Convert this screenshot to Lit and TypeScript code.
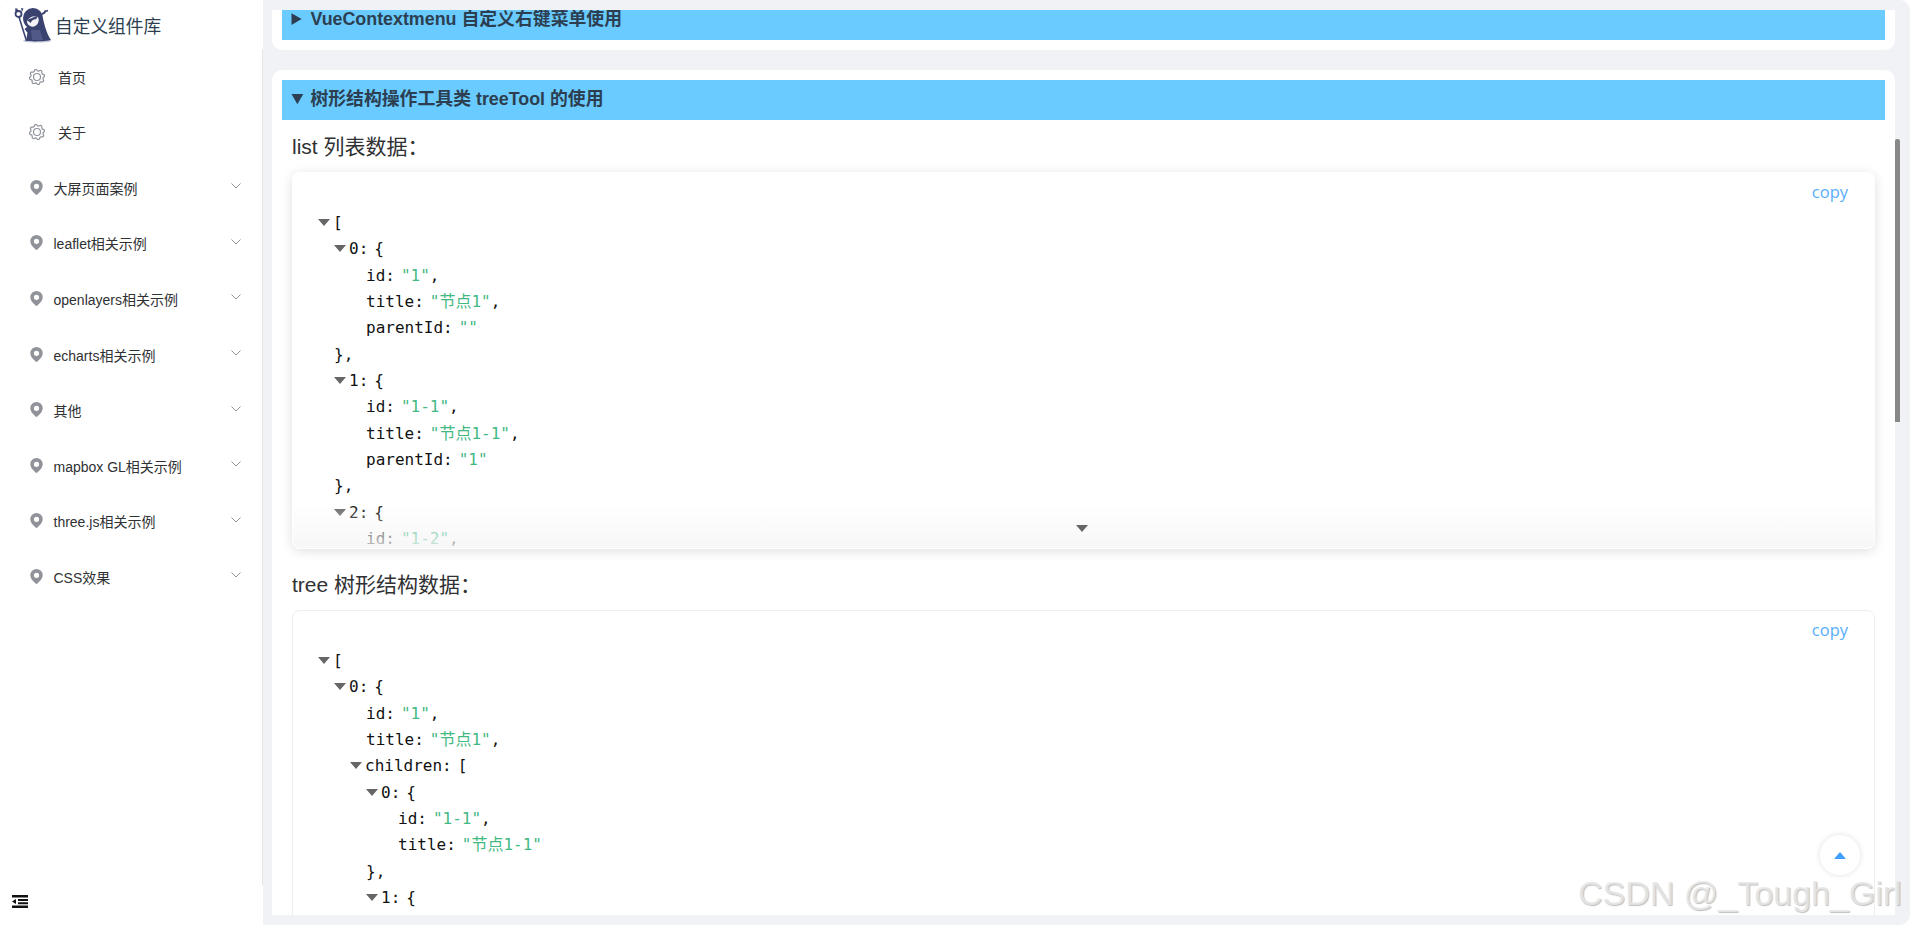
import { LitElement, html, css, svg } from "lit";
import { customElement } from "lit/decorators.js";

type Seg = { t: string; c?: "k" | "s" | "p" };
type Line = { level: number; arrow?: boolean; segs: Seg[] };

const key = (k: string) => ({ t: k + ":", c: "k" as const });
const str = (s: string) => ({ t: `"${s}"`, c: "s" as const });
const p = (s: string) => ({ t: s, c: "p" as const });

const LIST: Line[] = [
  { level: 0, arrow: true, segs: [p("[")] },
  { level: 1, arrow: true, segs: [key("0"), p("{")] },
  { level: 2, segs: [key("id"), str("1"), p(",")] },
  { level: 2, segs: [key("title"), str("节点1"), p(",")] },
  { level: 2, segs: [key("parentId"), str("")] },
  { level: 0, segs: [p("},")] },
  { level: 1, arrow: true, segs: [key("1"), p("{")] },
  { level: 2, segs: [key("id"), str("1-1"), p(",")] },
  { level: 2, segs: [key("title"), str("节点1-1"), p(",")] },
  { level: 2, segs: [key("parentId"), str("1")] },
  { level: 0, segs: [p("},")] },
  { level: 1, arrow: true, segs: [key("2"), p("{")] },
  { level: 2, segs: [key("id"), str("1-2"), p(",")] },
];

const TREE: Line[] = [
  { level: 0, arrow: true, segs: [p("[")] },
  { level: 1, arrow: true, segs: [key("0"), p("{")] },
  { level: 2, segs: [key("id"), str("1"), p(",")] },
  { level: 2, segs: [key("title"), str("节点1"), p(",")] },
  { level: 2, arrow: true, segs: [key("children"), p("[")] },
  { level: 3, arrow: true, segs: [key("0"), p("{")] },
  { level: 4, segs: [key("id"), str("1-1"), p(",")] },
  { level: 4, segs: [key("title"), str("节点1-1")] },
  { level: 2, segs: [p("},")] },
  { level: 3, arrow: true, segs: [key("1"), p("{")] },
];

const MENU: { label: string; icon: "gear" | "pin"; sub?: boolean }[] = [
  { label: "首页", icon: "gear" },
  { label: "关于", icon: "gear" },
  { label: "大屏页面案例", icon: "pin", sub: true },
  { label: "leaflet相关示例", icon: "pin", sub: true },
  { label: "openlayers相关示例", icon: "pin", sub: true },
  { label: "echarts相关示例", icon: "pin", sub: true },
  { label: "其他", icon: "pin", sub: true },
  { label: "mapbox GL相关示例", icon: "pin", sub: true },
  { label: "three.js相关示例", icon: "pin", sub: true },
  { label: "CSS效果", icon: "pin", sub: true },
];

const gearPoints = Array.from({ length: 32 }, (_, i) => {
  const a = ((i - 1.5) * Math.PI) / 16;
  const r = i % 4 < 2 ? 7.6 : 6.2;
  return `${(8 + r * Math.cos(a)).toFixed(2)},${(8 + r * Math.sin(a)).toFixed(2)}`;
}).join(" ");

const gear = svg`<svg class="gear" viewBox="0 0 16 16" width="16" height="16" fill="none" stroke="#8f939c" stroke-width="1.2"><polygon points=${gearPoints} stroke-linejoin="round"/><circle cx="8" cy="8" r="3.5"/></svg>`;
const pin = svg`<svg class="pin" viewBox="0 0 13 15" width="13" height="15"><path fill="#909399" fill-rule="evenodd" d="M6.500 0A6.200 6.200 0 0 0 .3 6.200c0 3.600 4 7.300 6.200 8.800 2.200-1.500 6.200-5.200 6.200-8.800A6.200 6.200 0 0 0 6.500 0zm0 3.700a2.600 2.600 0 1 1 0 5.200 2.600 2.600 0 0 1 0-5.200z"/></svg>`;
const chevron = svg`<svg class="chev" viewBox="0 0 10 6" width="10" height="6" fill="none" stroke="#909399" stroke-width="1"><path d="M.5.5 5 5 9.500.5"/></svg>`;
const logo = svg`<svg class="logo" viewBox="0 0 38 38" width="38" height="38">
  <ellipse cx="23" cy="36" rx="14" ry="1.600" fill="#c5cadb"/>
  <path fill="#3a4270" d="M9 13a10 10 0 0 1 20 0c0 1 .2 2 .6 3.200 1.400 5.400 3 12 7.400 18.800-4 1.500-20 1.800-25 .8l1.500-8-3-3.800 2.600-2C10 19.500 9 16 9 13z"/>
  <path fill="#58618f" opacity=".75" d="M17 25h9l3 10H18z"/>
  <path fill="#f3f2f6" d="M13.300 15.500c1.500-3 6-5.300 9.500-4 2.400 1 2.300 4.600 1 7-1.200 2.200-4.200 3.700-6.500 3-2.600-.8-5-3.500-4-6z"/>
  <path fill="#3a4270" d="M13 15c3-1 6.400-3 10.500-4.200l-1.200 3.400c-2.600-.4-4.600 1.200-5.800 3.800z"/>
  <path fill="none" stroke="#3a4270" stroke-width="1.800" d="M28 9c2-.4 3.200-1.500 3.400-3.600M31 6.500l3-1"/>
  <path fill="none" stroke="#3a4270" stroke-width="1.500" d="M5 12l7.500 24"/>
  <circle cx="4.500" cy="9" r="3" fill="none" stroke="#3a4270" stroke-width="1.800"/>
  <path fill="#3a4270" d="M1 3.500h2.400L4 6 1.600 7zM7 3l2.500.6L8 7z"/>
</svg>`;
const lines = svg`<svg class="fold" viewBox="0 0 16 13" width="16" height="13"><path fill="#111" d="M0 0h16v2.500H0zM6 4h10v2H6zM6 7.200h10v2H6zM0 10.500h16V13H0zM0 6.500l4-2.500v5z"/></svg>`;

@customElement("json-box")
class JsonBox extends LitElement {
  static properties = { lines: { attribute: false }, boxed: { type: Boolean, reflect: true } };
  lines: Line[] = [];
  boxed = false;
  static styles = css`
    :host {
      display: block;
      position: relative;
      background: #fff;
      border: 1px solid #eee;
      border-radius: 8px;
      box-sizing: border-box;
      padding: 37px 0 0 41px;
      overflow: hidden;
      font-family: "DejaVu Sans Mono", "Noto Sans CJK SC", monospace;
      font-size: 16px;
      color: #111;
      min-height: 420px;
    }
    :host([boxed]) {
      height: 377px;
      min-height: 0;
      border-color: transparent;
      box-shadow: 0 2px 12px rgba(0, 0, 0, 0.13);
    }
    .copy {
      position: absolute;
      top: 7px;
      right: 26px;
      font: 16.5px/24px "Open Sans", sans-serif;
      color: #58aefb;
    }
    .line {
      position: relative;
      height: 26.33px;
      line-height: 26.33px;
      white-space: nowrap;
    }
    .arrow {
      display: inline-block;
      vertical-align: 2px;
      width: 0;
      height: 0;
      margin-left: -16px;
      margin-right: 3px;
      border-left: 6.5px solid transparent;
      border-right: 6.5px solid transparent;
      border-top: 7px solid #666;
    }
    .k {
      margin-right: 6px;
    }
    .s {
      color: #42b983;
    }
    .fade {
      position: absolute;
      left: 0;
      right: 0;
      bottom: 0;
      height: 45px;
      background: linear-gradient(to bottom, rgba(245, 245, 245, 0), rgba(245, 245, 245, 0.8));
      display: flex;
      justify-content: center;
      padding-top: 22px;
      box-sizing: border-box;
    }
    .fade i {
      width: 0;
      height: 0;
      border-left: 6.5px solid transparent;
      border-right: 6.5px solid transparent;
      border-top: 7px solid #666;
      margin-left: -4px;
    }
  `;
  render() {
    return html`
      <span class="copy">copy</span>
      ${this.lines.map(
        (l) => html`<div class="line" style="padding-left:${l.level * 16}px">${l.arrow ? html`<span class="arrow"></span>` : ""}${l.segs.map(
          (s) => html`<span class=${s.c ?? ""}>${s.t}</span>`
        )}</div>`
      )}
      ${this.boxed ? html`<div class="fade"><i></i></div>` : ""}
    `;
  }
}

@customElement("app-root")
class AppRoot extends LitElement {
  static styles = css`
    :host {
      display: block;
      height: 100vh;
      background: #fff;
      font-family: "Liberation Sans", "Noto Sans CJK SC", sans-serif;
    }
    .page {
      position: relative;
      display: flex;
      height: 925px;
      overflow: hidden;
      background: #f0f2f6;
      border-radius: 10px;
    }
    .side {
      width: 263px;
      flex: none;
      display: flex;
      flex-direction: column;
      background: #fff;
    }
    .brand {
      height: 49px;
      flex: none;
      display: flex;
      align-items: center;
      padding-left: 14px;
      gap: 3px;
      font-size: 17.7px;
      color: #2c3e50;
    }
    .logo {
      margin-top: -2px;
    }
    .menu {
      flex: 1;
      border-right: 1px solid #e6e6e6;
    }
    .item {
      height: 55.55px;
      display: flex;
      align-items: center;
      padding-left: 30px;
      font-size: 14px;
      color: #303133;
    }
    .gear {
      margin-left: -1px;
      margin-right: 13px;
    }
    .pin {
      margin-right: 10.5px;
      margin-top: -1px;
    }
    .chev {
      margin-left: auto;
      margin-right: 21px;
      margin-top: -3px;
    }
    .foot {
      height: 40px;
      flex: none;
      box-sizing: border-box;
      padding: 10px 0 0 12px;
    }
    .fold {
      display: block;
    }
    .main {
      flex: 1;
      min-width: 0;
      padding: 10px 15px 10px 9px;
    }
    .scroller {
      position: relative;
      height: 905px;
      overflow: hidden;
    }
    .card {
      background: #fff;
      border-radius: 10px;
      padding: 10px;
      margin-bottom: 20px;
    }
    .card.first {
      margin-top: -20px;
    }
    details {
      display: block;
    }
    summary {
      height: 40px;
      line-height: 39px;
      padding-left: 9.5px;
      background: #69cbff;
      font-size: 17.85px;
      font-weight: bold;
      color: #2c3e50;
    }
    .label {
      height: 50px;
      line-height: 49px;
      margin: 2px 0 0;
      padding-left: 10px;
      font-size: 21px;
      font-weight: normal;
      color: #303133;
    }
    .label.second {
      margin-top: 11px;
    }
    json-box {
      margin: 0 10px;
    }
    .thumb {
      position: absolute;
      left: 1895px;
      top: 139px;
      width: 5px;
      height: 283px;
      border-radius: 2px 2px 0 0;
      background: #888;
    }
    .top {
      position: absolute;
      left: 1820px;
      top: 835px;
      width: 40px;
      height: 40px;
      border-radius: 50%;
      background: #fff;
      box-shadow: 0 0 6px rgba(0, 0, 0, 0.12);
      display: flex;
      align-items: center;
      justify-content: center;
    }
    .top i {
      width: 0;
      height: 0;
      border-left: 6px solid transparent;
      border-right: 6px solid transparent;
      border-bottom: 7px solid #409eff;
    }
    .mark {
      position: absolute;
      left: 1578px;
      top: 871px;
      font-size: 34px;
      line-height: 44px;
      white-space: nowrap;
      color: rgba(232, 232, 232, 0.85);
      text-shadow: 1px 1px 1px rgba(0, 0, 0, 0.25);
    }
  `;
  render() {
    return html`
      <div class="page">
        <aside class="side">
          <div class="brand">${logo}<span>自定义组件库</span></div>
          <nav class="menu">
            ${MENU.map(
              (m) => html`<div class="item">
                ${m.icon === "gear" ? gear : pin}<span>${m.label}</span>${m.sub ? chevron : ""}
              </div>`
            )}
          </nav>
          <div class="foot">${lines}</div>
        </aside>
        <main class="main">
          <div class="scroller">
            <section class="card first">
              <details><summary>VueContextmenu 自定义右键菜单使用</summary></details>
            </section>
            <section class="card">
              <details open>
                <summary>树形结构操作工具类 treeTool 的使用</summary>
                <h3 class="label">list 列表数据：</h3>
                <json-box boxed .lines=${LIST}></json-box>
                <h3 class="label second">tree 树形结构数据：</h3>
                <json-box .lines=${TREE}></json-box>
              </details>
            </section>
          </div>
        </main>
        <div class="thumb"></div>
        <div class="top"><i></i></div>
        <div class="mark">CSDN @_Tough_Girl</div>
      </div>
    `;
  }
}
